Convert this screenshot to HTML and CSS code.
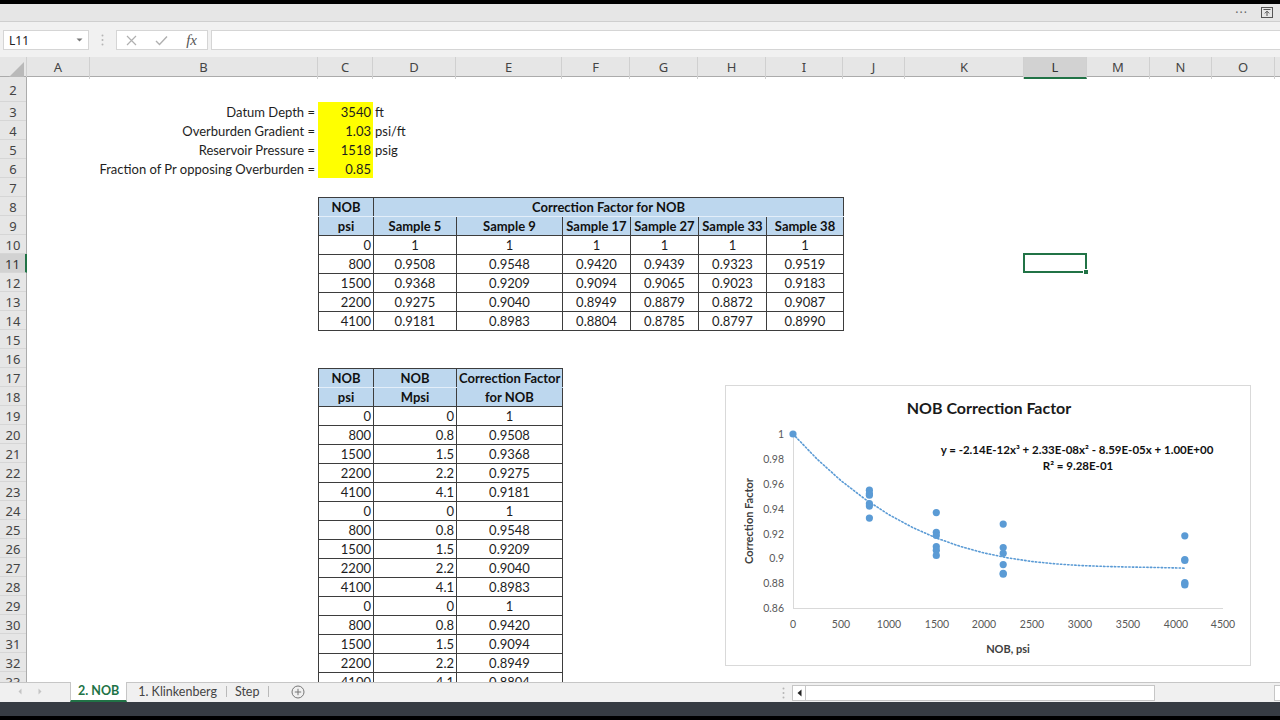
FILE: index.html
```html
<!DOCTYPE html>
<html>
<head>
<meta charset="utf-8">
<title>NOB</title>
<link rel="stylesheet" href="styles.css">
</head>
<body>
<div class="app">
  <div class="topbar"></div>
  <div class="ribbon">
    <span class="more">···</span>
    <svg class="ribbon-btn" width="12" height="11" viewBox="0 0 12 11"><rect x="0.5" y="0.5" width="11" height="10" fill="none" stroke="#555"/><path d="M2.5 2.5h7" stroke="#555"/><path d="M6 9V4.2M3.8 6.4L6 4.2l2.2 2.2" stroke="#555" fill="none"/></svg>
  </div>
  <div class="formula-bar">
    <div class="namebox"><span>L11</span><svg width="7" height="4" viewBox="0 0 7 4"><path d="M0.5 0.5h6L3.5 3.5z" fill="#777"/></svg></div>
    <div class="fb-dots"><svg width="3" height="12" viewBox="0 0 3 12"><circle cx="1.5" cy="1.5" r="1" fill="#b5b5b5"/><circle cx="1.5" cy="6" r="1" fill="#b5b5b5"/><circle cx="1.5" cy="10.5" r="1" fill="#b5b5b5"/></svg></div>
    <div class="fb-buttons">
      <svg width="11" height="11" viewBox="0 0 11 11"><path d="M1 1l9 9M10 1l-9 9" stroke="#b0b0b0" stroke-width="1.2"/></svg>
      <svg width="13" height="11" viewBox="0 0 13 11"><path d="M1 6l3.5 3.5L12 1.5" stroke="#b0b0b0" stroke-width="1.4" fill="none"/></svg>
      <span class="fx">fx</span>
    </div>
    <div class="fb-input"></div>
  </div>
  <div class="col-headers">
    <div class="corner"><svg width="15" height="15" viewBox="0 0 15 15"><path d="M15 0V15H0z" fill="#b9b9b9"/></svg></div>
    <div class="ch">A</div>
    <div class="ch">B</div>
    <div class="ch">C</div>
    <div class="ch">D</div>
    <div class="ch">E</div>
    <div class="ch">F</div>
    <div class="ch">G</div>
    <div class="ch">H</div>
    <div class="ch">I</div>
    <div class="ch">J</div>
    <div class="ch">K</div>
    <div class="ch sel">L</div>
    <div class="ch">M</div>
    <div class="ch">N</div>
    <div class="ch">O</div>
    <div class="ch last"></div>
  </div>
  <div class="sheet-body">
    <div class="row-headers">
      <div class="rh first">2</div>
      <div class="rh">3</div>
      <div class="rh">4</div>
      <div class="rh">5</div>
      <div class="rh">6</div>
      <div class="rh">7</div>
      <div class="rh">8</div>
      <div class="rh">9</div>
      <div class="rh">10</div>
      <div class="rh sel">11</div>
      <div class="rh">12</div>
      <div class="rh">13</div>
      <div class="rh">14</div>
      <div class="rh">15</div>
      <div class="rh">16</div>
      <div class="rh">17</div>
      <div class="rh">18</div>
      <div class="rh">19</div>
      <div class="rh">20</div>
      <div class="rh">21</div>
      <div class="rh">22</div>
      <div class="rh">23</div>
      <div class="rh">24</div>
      <div class="rh">25</div>
      <div class="rh">26</div>
      <div class="rh">27</div>
      <div class="rh">28</div>
      <div class="rh">29</div>
      <div class="rh">30</div>
      <div class="rh">31</div>
      <div class="rh">32</div>
      <div class="rh">33</div>
    </div>
    <div class="cells">
      <div class="params">
        <div class="pl">Datum Depth =</div><div class="pv">3540</div><div class="pu">ft</div>
        <div class="pl">Overburden Gradient =</div><div class="pv">1.03</div><div class="pu">psi/ft</div>
        <div class="pl">Reservoir Pressure =</div><div class="pv">1518</div><div class="pu">psig</div>
        <div class="pl">Fraction of Pr opposing Overburden =</div><div class="pv">0.85</div><div class="pu"></div>
      </div>

      <table class="tbl t1">
        <colgroup><col class="w55"><col class="w83"><col class="w106"><col class="w68"><col class="w68"><col class="w68"><col class="w77"></colgroup>
        <tr class="hd1"><th>NOB</th><th colspan="6">Correction Factor for NOB</th></tr>
        <tr class="hd2"><th>psi</th><th>Sample 5</th><th>Sample 9</th><th>Sample 17</th><th>Sample 27</th><th>Sample 33</th><th>Sample 38</th></tr>
        <tr><td class="r">0</td><td>1</td><td>1</td><td>1</td><td>1</td><td>1</td><td>1</td></tr>
        <tr><td class="r">800</td><td>0.9508</td><td>0.9548</td><td>0.9420</td><td>0.9439</td><td>0.9323</td><td>0.9519</td></tr>
        <tr><td class="r">1500</td><td>0.9368</td><td>0.9209</td><td>0.9094</td><td>0.9065</td><td>0.9023</td><td>0.9183</td></tr>
        <tr><td class="r">2200</td><td>0.9275</td><td>0.9040</td><td>0.8949</td><td>0.8879</td><td>0.8872</td><td>0.9087</td></tr>
        <tr><td class="r">4100</td><td>0.9181</td><td>0.8983</td><td>0.8804</td><td>0.8785</td><td>0.8797</td><td>0.8990</td></tr>
      </table>

      <table class="tbl t2">
        <colgroup><col class="w55"><col class="w83"><col class="w106"></colgroup>
        <tr class="hd1"><th>NOB</th><th>NOB</th><th class="nosep">Correction Factor</th></tr>
        <tr class="hd2"><th>psi</th><th>Mpsi</th><th>for NOB</th></tr>
        <tr><td class="r">0</td><td class="r">0</td><td>1</td></tr>
        <tr><td class="r">800</td><td class="r">0.8</td><td>0.9508</td></tr>
        <tr><td class="r">1500</td><td class="r">1.5</td><td>0.9368</td></tr>
        <tr><td class="r">2200</td><td class="r">2.2</td><td>0.9275</td></tr>
        <tr><td class="r">4100</td><td class="r">4.1</td><td>0.9181</td></tr>
        <tr><td class="r">0</td><td class="r">0</td><td>1</td></tr>
        <tr><td class="r">800</td><td class="r">0.8</td><td>0.9548</td></tr>
        <tr><td class="r">1500</td><td class="r">1.5</td><td>0.9209</td></tr>
        <tr><td class="r">2200</td><td class="r">2.2</td><td>0.9040</td></tr>
        <tr><td class="r">4100</td><td class="r">4.1</td><td>0.8983</td></tr>
        <tr><td class="r">0</td><td class="r">0</td><td>1</td></tr>
        <tr><td class="r">800</td><td class="r">0.8</td><td>0.9420</td></tr>
        <tr><td class="r">1500</td><td class="r">1.5</td><td>0.9094</td></tr>
        <tr><td class="r">2200</td><td class="r">2.2</td><td>0.8949</td></tr>
        <tr><td class="r">4100</td><td class="r">4.1</td><td>0.8804</td></tr>
      </table>

      <div class="selected"><span class="handle"></span></div>
    </div>

    <div class="chart">
      <svg width="526" height="281" viewBox="0 0 526 281">
        <text class="c-title" x="263" y="28" text-anchor="middle">NOB Correction Factor</text>
        <g class="axis">
          <path d="M67.5 48V222.5M67 222.5H497" stroke="#d9d9d9" stroke-width="1" fill="none"/>
        </g>
        <g class="ticks" text-anchor="end">
          <text x="58" y="52">1</text>
          <text x="58" y="77">0.98</text>
          <text x="58" y="102">0.96</text>
          <text x="58" y="127">0.94</text>
          <text x="58" y="152">0.92</text>
          <text x="58" y="176">0.9</text>
          <text x="58" y="201">0.88</text>
          <text x="58" y="226">0.86</text>
        </g>
        <g class="ticks" text-anchor="middle">
          <text x="67" y="242">0</text>
          <text x="115" y="242">500</text>
          <text x="163" y="242">1000</text>
          <text x="211" y="242">1500</text>
          <text x="258" y="242">2000</text>
          <text x="306" y="242">2500</text>
          <text x="354" y="242">3000</text>
          <text x="402" y="242">3500</text>
          <text x="450" y="242">4000</text>
          <text x="497" y="242">4500</text>
        </g>
        <text class="c-axis" x="282" y="267" text-anchor="middle">NOB, psi</text>
        <text class="c-axis" transform="translate(27 135) rotate(-90)" text-anchor="middle">Correction Factor</text>
        <path class="trend" d="M67 48L90.9 72.9L114.8 94.5L138.7 112.9L162.6 128.5L186.4 141.4L210.3 152L234.2 160.4L258.1 167L282 171.9L305.9 175.5L329.8 177.9L353.7 179.5L377.6 180.4L401.4 181L425.3 181.4L449.2 181.9L458.8 182.2"/>
        <g class="pts">
          <circle cx="67" cy="48" r="3.6"/>
          <circle cx="143.4" cy="109.2" r="3.6"/>
          <circle cx="143.4" cy="104.2" r="3.6"/>
          <circle cx="143.4" cy="120.1" r="3.6"/>
          <circle cx="143.4" cy="117.7" r="3.6"/>
          <circle cx="143.4" cy="132.1" r="3.6"/>
          <circle cx="143.4" cy="107.8" r="3.6"/>
          <circle cx="210.3" cy="126.6" r="3.6"/>
          <circle cx="210.3" cy="146.3" r="3.6"/>
          <circle cx="210.3" cy="160.6" r="3.6"/>
          <circle cx="210.3" cy="164.2" r="3.6"/>
          <circle cx="210.3" cy="169.4" r="3.6"/>
          <circle cx="210.3" cy="149.5" r="3.6"/>
          <circle cx="277.2" cy="138.1" r="3.6"/>
          <circle cx="277.2" cy="167.3" r="3.6"/>
          <circle cx="277.2" cy="178.6" r="3.6"/>
          <circle cx="277.2" cy="187.3" r="3.6"/>
          <circle cx="277.2" cy="188.2" r="3.6"/>
          <circle cx="277.2" cy="161.5" r="3.6"/>
          <circle cx="458.8" cy="149.8" r="3.6"/>
          <circle cx="458.8" cy="174.4" r="3.6"/>
          <circle cx="458.8" cy="196.7" r="3.6"/>
          <circle cx="458.8" cy="199" r="3.6"/>
          <circle cx="458.8" cy="197.5" r="3.6"/>
          <circle cx="458.8" cy="173.5" r="3.6"/>
        </g>
        <text class="c-eq" x="351" y="68" text-anchor="middle">y = -2.14E-12x³ + 2.33E-08x² - 8.59E-05x + 1.00E+00</text>
        <text class="c-eq" x="352" y="84" text-anchor="middle">R² = 9.28E-01</text>
      </svg>
    </div>
  </div>
  <div class="tabbar">
    <div class="tab-nav">
      <svg width="4" height="7" viewBox="0 0 4 7"><path d="M3.5 0.5v6L0.5 3.5z" fill="#c4c4c4"/></svg>
      <svg width="4" height="7" viewBox="0 0 4 7"><path d="M0.5 0.5v6L3.5 3.5z" fill="#c4c4c4"/></svg>
    </div>
    <div class="tab active">2. NOB</div>
    <div class="tab first">1. Klinkenberg</div>
    <div class="tab-sep"></div>
    <div class="tab">Step</div>
    <div class="tab-sep"></div>
    <div class="tab-add"><svg width="14" height="14" viewBox="0 0 14 14"><circle cx="7" cy="7" r="6" fill="none" stroke="#777"/><path d="M7 3.8v6.4M3.8 7h6.4" stroke="#777"/></svg></div>
    <div class="tab-spacer"></div>
    <div class="hs-dots"><svg width="3" height="12" viewBox="0 0 3 12"><circle cx="1.5" cy="1.5" r="1" fill="#b5b5b5"/><circle cx="1.5" cy="6" r="1" fill="#b5b5b5"/><circle cx="1.5" cy="10.5" r="1" fill="#b5b5b5"/></svg></div>
    <div class="hscroll">
      <div class="hs-btn"><svg width="5" height="8" viewBox="0 0 5 8"><path d="M4.5 0.5v7L0.5 4z" fill="#222"/></svg></div>
      <div class="hs-thumb"></div>
    </div>
    <div class="hs-track"></div>
    <div class="hs-btn right"></div>
  </div>
  <div class="taskbar"></div>
</div>
</body>
</html>
```

FILE: styles.css
```css
* { box-sizing: border-box; margin: 0; padding: 0; }
html, body { width: 1280px; height: 720px; overflow: hidden; background: #fff; }
body { font-family: "Lato", "Liberation Sans", sans-serif; }

.app { width: 1280px; height: 720px; display: flex; flex-direction: column; }

.topbar { flex: none; height: 4px; background: #000; }

.ribbon {
  flex: none; height: 18px; background: #e6e6e6; border-bottom: 1px solid #cfcfcf;
  display: flex; align-items: center; justify-content: flex-end; gap: 13px; padding-right: 7px;
}
.ribbon .more { font: 12px "Noto Sans", sans-serif; color: #666; letter-spacing: 1px; line-height: 10px; }

.formula-bar {
  flex: none; height: 35px; background: #f1f1f1; display: flex; align-items: flex-start;
  padding: 8px 0 0 3px;
}
.namebox {
  width: 86px; height: 20px; background: #fff; border: 1px solid #d5d5d5;
  display: flex; align-items: center; justify-content: space-between; padding: 0 5px 0 5px;
  font: 12px "Noto Sans", sans-serif; color: #222;
}
.fb-dots { width: 27px; height: 20px; display: flex; align-items: center; justify-content: center; }
.fb-buttons {
  width: 92px; height: 20px; background: #fff; border: 1px solid #d5d5d5;
  display: flex; align-items: center; justify-content: space-between; padding: 0 10px 0 9px;
}
.fx { font: italic 15px "Liberation Serif", serif; color: #555; line-height: 18px; }
.fb-input { flex: 1; height: 20px; margin-left: 3px; background: #fff; border: 1px solid #d5d5d5; border-right: none; }

.col-headers {
  flex: none; height: 20px; background: #e6e6e6; border-bottom: 1px solid #ababab;
  display: grid;
  grid-template-columns: 27px 63px 228px 55px 83px 106px 68px 68px 68px 77px 62px 119px 63px 63px 62px 63px 1fr;
}
.corner { display: flex; align-items: flex-end; justify-content: flex-end; padding: 0 2px 2px 0; border-right: 1px solid #d0d0d0; }
.ch {
  border-right: 1px solid #d0d0d0; text-align: center;
  font: 13px "Noto Sans", sans-serif; color: #444; line-height: 20px;
}
.ch.last { border-right: none; }
.ch.sel { background: #d2d2d2; border-bottom: 2px solid #217346; color: #333; }

.sheet-body { flex: 1; position: relative; display: flex; overflow: hidden; }

.row-headers { flex: none; width: 27px; background: #e6e6e6; border-right: 1px solid #ababab; }
.rh {
  height: 19px; border-bottom: 1px solid #d6d6d6; display: flex; align-items: center; justify-content: center;
  font: 13px "Noto Sans", sans-serif; color: #444; padding-top: 1px;
}
.rh.first { height: 25px; align-items: flex-end; padding-bottom: 2px; }
.rh.sel { background: #d2d2d2; border-right: 2px solid #217346; margin-right: -1px; color: #333; }

.cells {
  flex: 1; display: grid; align-content: start;
  grid-template-columns: 63px 228px 55px 83px 106px 68px 68px 68px 77px 62px 119px 63px 63px 62px 63px 1fr;
  grid-template-rows: 25px repeat(31, 19px);
  font-size: 13px; color: #1e1e1e;
}

.params {
  grid-column: 2 / 5; grid-row: 2 / 6;
  display: grid; grid-template-columns: 228px 55px 83px; grid-auto-rows: 19px;
  line-height: 19px; white-space: nowrap;
}
.pl { text-align: right; padding: 1px 3px 0 0; }
.pv { background: #ffff00; text-align: right; padding: 1px 2px 0 0; }
.pu { padding: 1px 0 0 2px; }

.tbl { border-collapse: collapse; table-layout: fixed; width: 100%; align-self: start; }
.t1 { grid-column: 3 / 10; grid-row: 7 / 14; }
.t2 { grid-column: 3 / 6; grid-row: 16 / 33; }
.w55 { width: 55px; } .w83 { width: 83px; } .w106 { width: 106px; } .w68 { width: 68px; } .w77 { width: 77px; }
.tbl tr { height: 19px; }
.tbl th, .tbl td {
  border: 1px solid #3d3d3d; padding: 1px 2px 0; height: 19px; line-height: 17px;
  text-align: center; white-space: nowrap; overflow: hidden; font-size: 13px;
}
.tbl th { background: #bdd7ee; font-weight: 700; color: #111; }
.tbl .hd1 th { border-bottom-color: #e3eef9; }
.tbl .hd1 th.nosep { border-bottom-color: #bdd7ee; }
.tbl .hd2 th { border-top-color: #e3eef9; }
.tbl td.r { text-align: right; }

.selected {
  grid-column: 12; grid-row: 10; position: relative;
  border: 2px solid #217346; margin: -1px 0 0 -1px;
}
.handle {
  position: absolute; right: -4px; bottom: -4px; width: 6px; height: 6px;
  background: #217346; border: 1px solid #fff;
}

.chart {
  position: absolute; left: 725px; top: 308px; width: 526px; height: 281px;
  background: #fff; border: 1px solid #d9d9d9;
}
.chart svg { display: block; font-family: "Lato", "Liberation Sans", sans-serif; }
.c-title { font-size: 16px; font-weight: 700; fill: #1a1a1a; }
.ticks text { font-size: 10.5px; fill: #595959; }
.c-axis { font-size: 11px; font-weight: 700; fill: #404040; }
.c-eq { font-size: 11.5px; font-weight: 700; fill: #111; }
.trend { fill: none; stroke: #5b9bd5; stroke-width: 1.6; stroke-dasharray: 1.4 2.2; stroke-linecap: round; }
.pts circle { fill: #5b9bd5; }

.tabbar {
  flex: none; height: 20px; background: #f0f0f0; border-top: 1px solid #c6c6c6;
  display: flex; align-items: stretch; font: 12.5px "Lato", sans-serif; color: #444;
}
.tab-nav { width: 70px; display: flex; align-items: center; gap: 16px; padding: 0 0 2px 18px; }
.tab { display: flex; align-items: center; padding: 0 9px 3px 8px; white-space: nowrap; }
.tab.first { padding-left: 11px; }
.tab.active {
  background: #fff; color: #217346; font-weight: 700; margin-top: -1px; padding: 0 7px 1px;
  border-left: 1px solid #c6c6c6; border-right: 1px solid #c6c6c6; border-bottom: 2px solid #217346;
}
.tab-sep { width: 1px; background: #b9b9b9; margin: 3px 0 5px; }
.tab-add { display: flex; align-items: center; padding: 0 0 2px 22px; }
.tab-spacer { flex: 1; }
.hs-dots { width: 17px; display: flex; align-items: center; justify-content: center; }
.hscroll { width: 363px; display: flex; background: #fff; border: 1px solid #c6c6c6; margin: 2px 0 1px; }
.hs-btn { width: 13px; display: flex; align-items: center; justify-content: center; border-right: 1px solid #c6c6c6; background: #fff; }
.hs-thumb { flex: 1; }
.hs-track { width: 119px; }
.hs-btn.right { width: 6px; border: 1px solid #c6c6c6; border-right: none; margin: 2px 0 1px; }

.taskbar { flex: none; height: 18px; background: #373c43; border-bottom: 4px solid #000; }
```
